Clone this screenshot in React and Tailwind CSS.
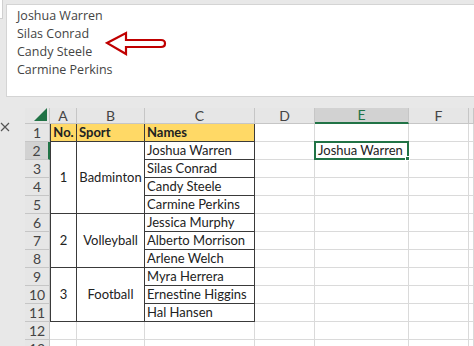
const rows = [
  { n: 1 },
  { n: 2, name: "Joshua Warren" },
  { n: 3, name: "Silas Conrad" },
  { n: 4, name: "Candy Steele" },
  { n: 5, name: "Carmine Perkins" },
  { n: 6, name: "Jessica Murphy" },
  { n: 7, name: "Alberto Morrison" },
  { n: 8, name: "Arlene Welch" },
  { n: 9, name: "Myra Herrera" },
  { n: 10, name: "Ernestine Higgins" },
  { n: 11, name: "Hal Hansen" },
  { n: 12 },
  { n: 13 },
];

const groups = [
  { start: 2, span: 4, no: "1", sport: "Badminton" },
  { start: 6, span: 3, no: "2", sport: "Volleyball" },
  { start: 9, span: 3, no: "3", sport: "Football" },
];

const cols = ["A", "B", "C", "D", "E", "F", ""];

const gridLine = "border-r border-b border-[#dadada]";
const dark = "border-[#3a3a3a]";

const App = () => {
  return (
    <div className="w-[474px] h-[346px] overflow-hidden bg-[#e8e8e8] font-['Lato',sans-serif] text-[#222]">
      {/* Formula bar */}
      <div className="relative h-[97px] pt-[4px] pl-[6px]">
        <div className="absolute left-0 top-0 w-[3px] h-[19px] bg-white border-r border-b border-[#d0d0d0]" />
        <div className="h-[93px] bg-white border border-[#d4d4d4] border-r-0 pl-[10px] pt-[2px] font-['Open_Sans',sans-serif] text-[12.5px] leading-[18px] text-[#444]">
          <div>Joshua Warren</div>
          <div>Silas Conrad</div>
          <div>Candy Steele</div>
          <div>Carmine Perkins</div>
        </div>
        <svg
          className="absolute left-[105px] top-[31px]"
          width="62"
          height="26"
          viewBox="0 0 62 26"
        >
          <path
            d="M2 12 L21 2 L21 9 L56 9 Q60 9 60 12.5 Q60 16 56 16 L21 16 L21 23 Z"
            fill="white"
            stroke="#c00000"
            strokeWidth="2.2"
          />
        </svg>
      </div>

      {/* Sheet */}
      <div className="flex pt-[11px]">
        <div className="relative w-[25px]">
          <svg
            className="absolute left-[0px] top-[14px]"
            width="10"
            height="10"
            viewBox="0 0 10 10"
          >
            <path d="M1 1 L9 9 M9 1 L1 9" stroke="#555" strokeWidth="1.2" />
          </svg>
        </div>
        <div className="grid flex-1 grid-cols-[25px_27px_68px_110px_60px_94px_60px_1fr] grid-rows-[16px_repeat(13,18px)] bg-white text-[13px] leading-none whitespace-nowrap">
          {/* Corner */}
          <div className="relative bg-[#e6e6e6] border-r border-b border-[#c6c6c6]">
            <div className="absolute right-[2px] bottom-[2px] w-0 h-0 border-l-[13px] border-l-transparent border-b-[13px] border-b-[#217346]" />
          </div>
          {cols.map((c, i) => (
            <div
              key={c + i}
              className={`flex items-center justify-center text-[14px] text-[#444] border-r border-[#c6c6c6] ${
                c === "E"
                  ? "bg-[#d2d2d2] border-b-2 border-b-[#217346] text-[#217346]"
                  : "bg-[#e6e6e6] border-b border-b-[#c6c6c6]"
              }`}
            >
              {c}
            </div>
          ))}

          {rows.map((r) => (
            <div
              key={"rh" + r.n}
              style={{ gridColumn: 1, gridRow: r.n + 1 }}
              className={`flex items-center justify-center text-[14px] text-[#444] border-b border-[#c6c6c6] ${
                r.n === 2
                  ? "bg-[#d2d2d2] border-r-2 border-r-[#217346]"
                  : "bg-[#e6e6e6] border-r border-r-[#c6c6c6]"
              }`}
            >
              {r.n}
            </div>
          ))}

          {/* Header row 1 */}
          <div
            style={{ gridColumn: 2, gridRow: 2 }}
            className={`flex items-center justify-center bg-[#ffd966] font-bold border-r border-b border-l ${dark}`}
          >
            No.
          </div>
          <div
            style={{ gridColumn: 3, gridRow: 2 }}
            className={`flex items-center pl-[2px] bg-[#ffd966] font-bold border-r border-b ${dark}`}
          >
            Sport
          </div>
          <div
            style={{ gridColumn: 4, gridRow: 2 }}
            className={`flex items-center pl-[2px] bg-[#ffd966] font-bold border-r border-b ${dark}`}
          >
            Names
          </div>

          {groups.map((g) => (
            <div key={g.no} className="contents">
              <div
                style={{ gridColumn: 2, gridRow: `${g.start + 1} / span ${g.span}` }}
                className={`flex items-center justify-center border-l border-r border-b ${dark}`}
              >
                {g.no}
              </div>
              <div
                style={{ gridColumn: 3, gridRow: `${g.start + 1} / span ${g.span}` }}
                className={`flex items-center justify-center border-r border-b ${dark}`}
              >
                {g.sport}
              </div>
            </div>
          ))}

          {rows
            .filter((r) => r.name)
            .map((r) => (
              <div
                key={"c" + r.n}
                style={{ gridColumn: 4, gridRow: r.n + 1 }}
                className={`flex items-center pl-[2px] overflow-hidden border-r border-b ${dark}`}
              >
                {r.name}
              </div>
            ))}

          {/* Empty rows 12, 13 in A-C */}
          {[12, 13].map((n) =>
            [2, 3, 4].map((c) => (
              <div
                key={`e${n}-${c}`}
                style={{ gridColumn: c, gridRow: n + 1 }}
                className={gridLine}
              />
            ))
          )}

          {/* D..G columns */}
          {rows.map((r) =>
            [5, 6, 7, 8].map((c) =>
              r.n === 2 && c === 6 ? (
                <div
                  key={`d${r.n}-${c}`}
                  style={{ gridColumn: c, gridRow: r.n + 1 }}
                  className="relative flex items-center pl-[2px] border-2 border-[#217346] -mt-[1px] -ml-[1px]"
                >
                  Joshua Warren
                  <div className="absolute -right-[3px] -bottom-[3px] w-[5px] h-[5px] bg-[#217346] border border-white" />
                </div>
              ) : (
                <div
                  key={`d${r.n}-${c}`}
                  style={{ gridColumn: c, gridRow: r.n + 1 }}
                  className={gridLine}
                />
              )
            )
          )}
        </div>
      </div>
    </div>
  );
};

export default App;
